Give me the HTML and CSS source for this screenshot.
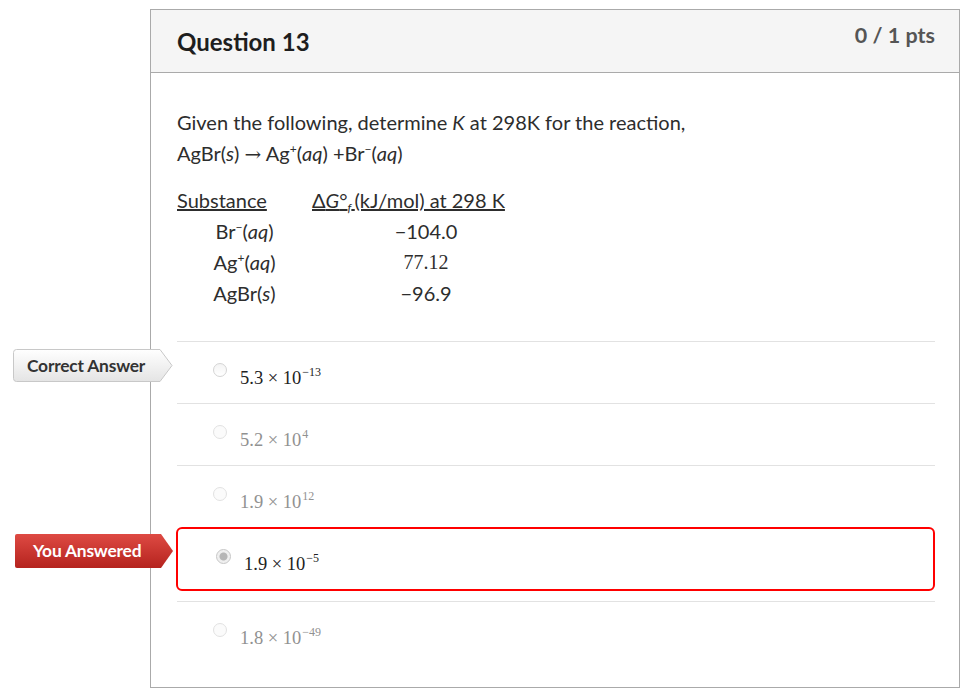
FILE: index.html
```html
<!DOCTYPE html>
<html>
<head>
<meta charset="utf-8">
<link rel="stylesheet" href="styles.css">
</head>
<body>
<div class="card">
  <div class="card-header">
    <h2 class="title">Question 13</h2>
    <div class="pts">0 / 1 pts</div>
  </div>
  <div class="card-body">
    <p class="question">Given the following, determine <i>K</i> at 298K for the reaction,<br>AgBr(<i>s</i>) <span class="arrow">&rarr;</span> Ag<sup>+</sup>(<i>aq</i>) +Br<sup>&minus;</sup>(<i>aq</i>)</p>
    <table class="data">
      <tr>
        <th class="c1"><u>Substance</u></th>
        <th class="c2"><u>&Delta;<i>G</i>°<sub><i>f</i>&nbsp;</sub>(kJ/mol) at 298 K</u></th>
      </tr>
      <tr><td>Br<sup>&minus;</sup>(<i>aq</i>)</td><td>&minus;104.0</td></tr>
      <tr><td>Ag<sup>+</sup>(<i>aq</i>)</td><td class="serif">77.12</td></tr>
      <tr><td>AgBr(<i>s</i>)</td><td>&minus;96.9</td></tr>
    </table>

    <div class="answers">
      <div class="answer correct">
        <div class="tag tag-correct">
          <svg class="tag-shape" width="160" height="33" viewBox="0 0 160 33">
            <defs>
              <linearGradient id="gGray" x1="0" y1="0" x2="0" y2="1">
                <stop offset="0" stop-color="#ffffff"/>
                <stop offset="1" stop-color="#e4e4e4"/>
              </linearGradient>
            </defs>
            <path d="M3.5,0.5 H147 L159,16.5 L147,32.5 H3.5 Q0.5,32.5 0.5,29.5 V3.5 Q0.5,0.5 3.5,0.5 Z" fill="url(#gGray)" stroke="#c8c8c8"/>
          </svg>
          <span class="tag-text">Correct Answer</span>
        </div>
        <span class="radio"></span>
        <span class="math">5.3 × 10<sup>−13</sup></span>
      </div>
      <div class="answer muted">
        <span class="radio"></span>
        <span class="math">5.2 × 10<sup>4</sup></span>
      </div>
      <div class="answer muted">
        <span class="radio"></span>
        <span class="math">1.9 × 10<sup>12</sup></span>
      </div>
      <div class="answer selected">
        <div class="tag tag-wrong">
          <svg class="tag-shape" width="159" height="34" viewBox="0 0 159 34">
            <defs>
              <linearGradient id="gRed" x1="0" y1="0" x2="0" y2="1">
                <stop offset="0" stop-color="#de4a43"/>
                <stop offset="1" stop-color="#b5231e"/>
              </linearGradient>
            </defs>
            <path d="M2,0 H146 L158,17 L146,34 H2 Q0,34 0,32 V2 Q0,0 2,0 Z" fill="url(#gRed)"/>
          </svg>
          <span class="tag-text">You Answered</span>
        </div>
        <span class="radio checked"></span>
        <span class="math">1.9 × 10<sup>−5</sup></span>
      </div>
      <div class="answer muted">
        <span class="radio"></span>
        <span class="math">1.8 × 10<sup>−49</sup></span>
      </div>
    </div>
  </div>
</div>
</body>
</html>
```

FILE: styles.css
```css
html, body {
  margin: 0;
  padding: 0;
  background: #ffffff;
}

body {
  font-family: Lato, "Noto Sans", sans-serif;
  color: #2d2d2d;
}

.card {
  margin: 9px 0 0 150px;
  width: 810px;
  border: 1px solid #aaaaaa;
  height: 679px;
  box-sizing: border-box;
}

.card-header {
  background: #f5f5f5;
  border-bottom: 1px solid #aaaaaa;
  height: 63px;
  box-sizing: border-box;
  display: flex;
  justify-content: space-between;
  align-items: flex-start;
  padding: 0 24px 0 26px;
}

.title {
  margin: 0;
  padding-top: 18px;
  font-size: 24px;
  font-weight: 700;
  line-height: 28px;
  color: #1e1e1e;
}

.pts {
  padding-top: 12px;
  font-size: 21.5px;
  font-weight: 700;
  line-height: 26px;
  color: #555555;
}

.card-body {
  padding: 0 24px 0 26px;
}

.question {
  margin: 0;
  padding-top: 34px;
  font-size: 20px;
  line-height: 31px;
  color: #2d2d2d;
}

.question sup,
.data sup {
  font-size: 12px;
  line-height: 0;
  vertical-align: baseline;
  position: relative;
  top: -8px;
}

.arrow {
  font-family: "DejaVu Serif", serif;
  font-size: 20px;
}

.data {
  margin-top: 15px;
  border-collapse: collapse;
  border-spacing: 0;
  font-size: 20px;
  color: #2d2d2d;
}

.data th,
.data td {
  padding: 0;
  height: 31px;
  line-height: 31px;
  font-weight: 400;
  text-align: center;
  vertical-align: top;
}

.data th {
  text-align: left;
}

.data .c1 {
  width: 135px;
}

.data .c2 {
  width: 228px;
}

.data sub {
  font-size: 12px;
  line-height: 0;
  vertical-align: baseline;
  position: relative;
  top: 4px;
}

.data .serif {
  font-family: "Liberation Serif", serif;
}

.answers {
  margin-top: 32px;
}

.answer {
  position: relative;
  display: flex;
  align-items: flex-start;
  border-top: 1px solid #e2e2e2;
  height: 40px;
  padding: 21px 0 0 36px;
  color: #222222;
}

.answer > .radio,
.answer > .math {
  position: relative;
}

.answer.muted {
  color: #919191;
}

.answer.selected {
  border: 2px solid #ff0000;
  border-radius: 6px;
  height: 40px;
  padding: 20px 0 0 38px;
  margin: 0 0 10px -1px;
}

.radio {
  width: 12px;
  height: 12px;
  border-radius: 50%;
  border: 1px solid #d4d4d4;
  background: linear-gradient(#f4f4f4, #ffffff);
  flex: none;
  margin-right: 13px;
}

.answer.muted .radio {
  border-color: #e2e2e2;
  background: #fbfbfb;
}

.radio.checked {
  width: 13px;
  height: 13px;
  border-color: #c6c6c6;
  background: radial-gradient(circle, #b6b6b6 0, #b6b6b6 3.5px, #eeeeee 4.5px, #f6f6f6 100%);
}

.math {
  font-family: "Liberation Serif", serif;
  font-size: 18.5px;
  line-height: 20px;
  margin-top: 5px;
}

.math sup {
  font-size: 12px;
  line-height: 0;
  vertical-align: baseline;
  position: relative;
  top: -8px;
  margin-left: 1px;
}

.tag {
  position: absolute;
  display: flex;
  align-items: center;
}

.tag-correct {
  left: -164px;
  top: 7px;
  width: 160px;
  height: 33px;
}

.tag-wrong {
  left: -163px;
  top: 5px;
  width: 159px;
  height: 34px;
}

.tag-shape {
  position: absolute;
  left: 0;
  top: 0;
}

.tag-text {
  position: relative;
  font-size: 17.4px;
  font-weight: 700;
  line-height: 20px;
  letter-spacing: -0.2px;
}

.tag-correct .tag-text {
  padding-left: 14px;
  color: #333333;
}

.tag-wrong .tag-text {
  padding-left: 18px;
  color: #ffffff;
}
```
